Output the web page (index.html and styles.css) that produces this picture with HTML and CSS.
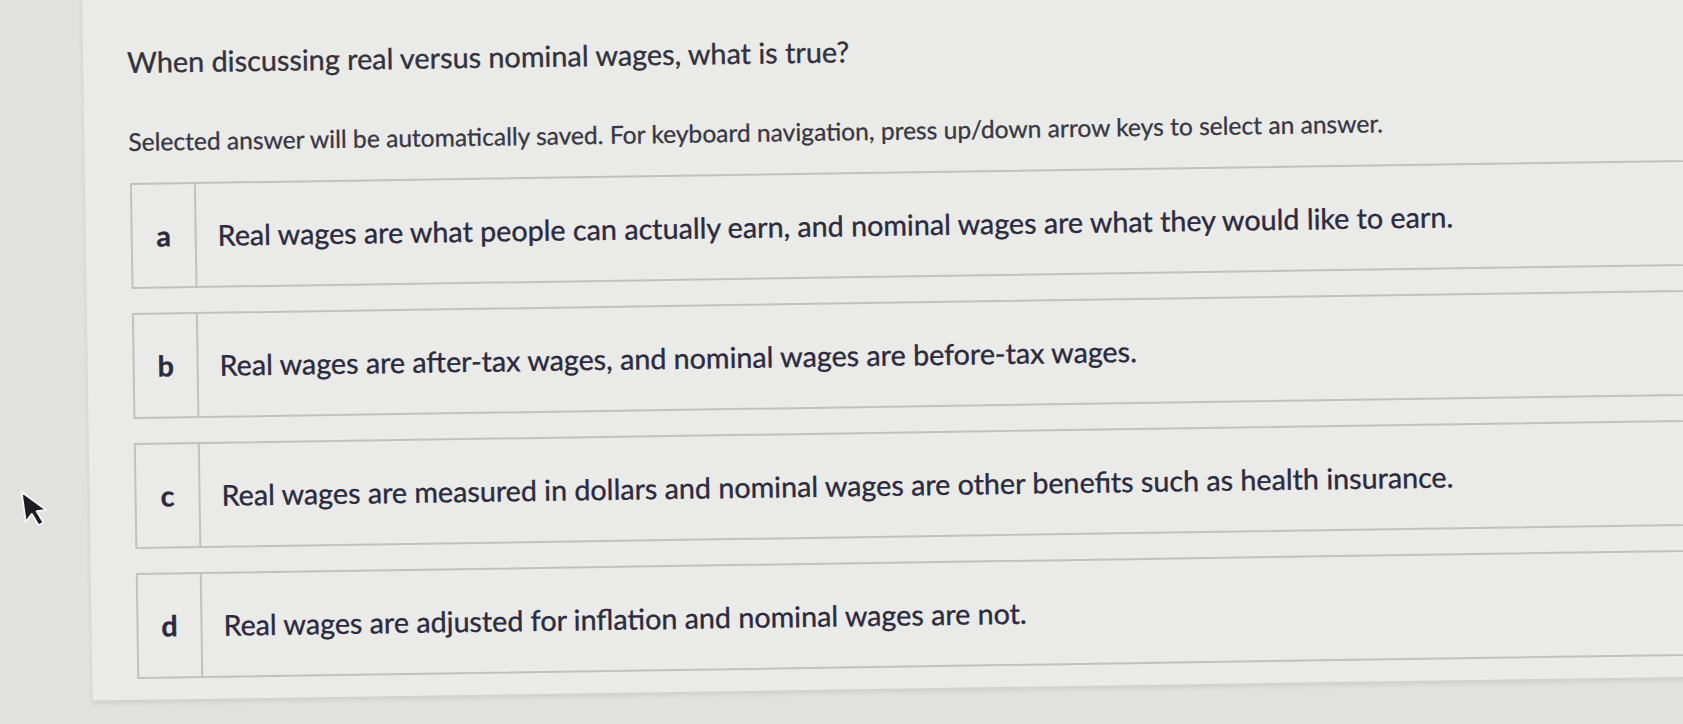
FILE: index.html
```html
<!DOCTYPE html>
<html lang="en">
<head>
<meta charset="utf-8">
<title>Question</title>
<link rel="stylesheet" href="styles.css">
</head>
<body>
<div class="page">
  <section class="panel">
    <h1 class="question">When discussing real versus nominal wages, what is true?</h1>
    <p class="hint">Selected answer will be automatically saved. For keyboard navigation, press up/down arrow keys to select an answer.</p>
    <ul class="options">
      <li class="option"><span class="letter">a</span><span class="answer">Real wages are what people can actually earn, and nominal wages are what they would like to earn.</span></li>
      <li class="option"><span class="letter">b</span><span class="answer">Real wages are after-tax wages, and nominal wages are before-tax wages.</span></li>
      <li class="option"><span class="letter">c</span><span class="answer">Real wages are measured in dollars and nominal wages are other benefits such as health insurance.</span></li>
      <li class="option"><span class="letter">d</span><span class="answer">Real wages are adjusted for inflation and nominal wages are not.</span></li>
    </ul>
  </section>
</div>
<svg class="pointer" width="31" height="44" viewBox="0 0 22 34" aria-hidden="true">
  <path d="M1.5 1.5 L1.5 25 L7 19.5 L11 29 L15 27.3 L11 18 L18.5 18 Z" fill="#1c1a22" stroke="#f4f4f4" stroke-width="1.5" stroke-linejoin="round"/>
</svg>
</body>
</html>
```

FILE: styles.css
```css
html, body {
  margin: 0;
  padding: 0;
}

body {
  width: 1683px;
  height: 724px;
  overflow: hidden;
  position: relative;
  background: #e1e1df;
  font-family: Lato, "Open Sans", Arial, sans-serif;
  color: #2e2c3a;
}

/* the whole sheet sits slightly tilted */
.page {
  transform: rotate(-0.85deg);
  transform-origin: 130px 430px;
}

.panel {
  box-sizing: border-box;
  margin: -40px 0 0 88px;
  padding: 85px 0 0 44px;
  width: 1760px;
  height: 740px;
  background: #eaeae8;
  box-shadow: 0 3px 5px rgba(0, 0, 0, 0.09);
}

.question {
  margin: 0;
  font-size: 28.8px;
  line-height: 34px;
  font-weight: 400;
  color: #33323c;
  -webkit-text-stroke: 0.35px #33323c;
}

.hint {
  margin: 48px 0 0;
  font-size: 24.6px;
  line-height: 30px;
  color: #383743;
  -webkit-text-stroke: 0.3px #383743;
}

.options {
  list-style: none;
  margin: 26px 0 0 1px;
  padding: 0;
  display: grid;
  gap: 24px;
}

.option {
  display: grid;
  grid-template-columns: 64px 1fr;
  width: 1700px;
  height: 102px;
  border: 2px solid #c1c1bf;
  font-size: 28.7px;
  line-height: 34px;
  color: #2c2a3e;
  -webkit-text-stroke: 0.35px #2c2a3e;
}

.letter {
  display: flex;
  align-items: center;
  justify-content: center;
  font-weight: 700;
  border-right: 2px solid #c1c1bf;
}

.answer {
  display: flex;
  align-items: center;
  padding-left: 21px;
}

.pointer {
  position: absolute;
  left: 21px;
  top: 488px;
  transform: rotate(-8deg);
}
```
